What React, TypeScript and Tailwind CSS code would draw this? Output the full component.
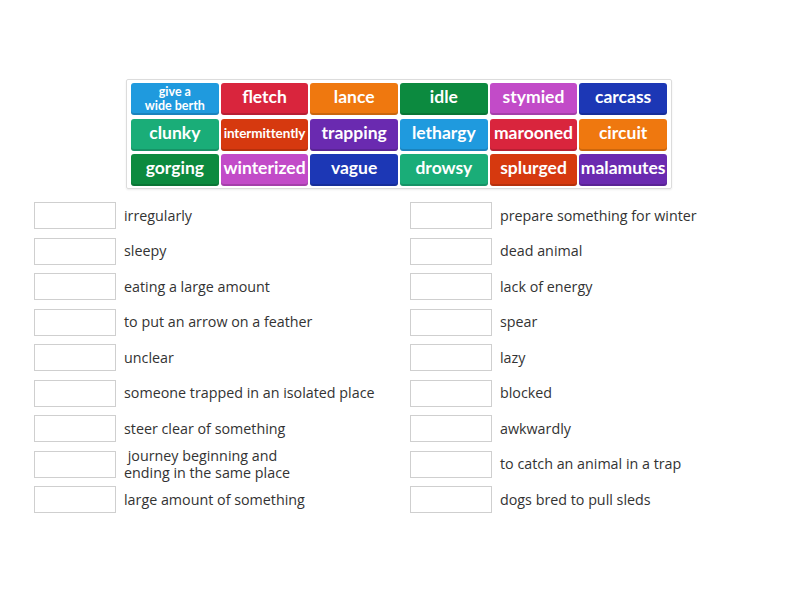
import React from 'react';

const tiles: { label: string; bg: string; small?: boolean; tiny?: boolean }[] = [
  { label: 'give a wide berth', bg: 'bg-[#1f9ade]', tiny: true },
  { label: 'fletch', bg: 'bg-[#d9253d]' },
  { label: 'lance', bg: 'bg-[#ef780f]' },
  { label: 'idle', bg: 'bg-[#0c8a3f]' },
  { label: 'stymied', bg: 'bg-[#c24bc8]' },
  { label: 'carcass', bg: 'bg-[#1c37b5]' },
  { label: 'clunky', bg: 'bg-[#1aad78]' },
  { label: 'intermittently', bg: 'bg-[#d6390f]', small: true },
  { label: 'trapping', bg: 'bg-[#6a2ab0]' },
  { label: 'lethargy', bg: 'bg-[#1f9ade]' },
  { label: 'marooned', bg: 'bg-[#d9253d]' },
  { label: 'circuit', bg: 'bg-[#ef780f]' },
  { label: 'gorging', bg: 'bg-[#0c8a3f]' },
  { label: 'winterized', bg: 'bg-[#c24bc8]' },
  { label: 'vague', bg: 'bg-[#1c37b5]' },
  { label: 'drowsy', bg: 'bg-[#1aad78]' },
  { label: 'splurged', bg: 'bg-[#d6390f]' },
  { label: 'malamutes', bg: 'bg-[#6a2ab0]' },
];

const left: React.ReactNode[] = [
  'irregularly',
  'sleepy',
  'eating a large amount',
  'to put an arrow on a feather',
  'unclear',
  'someone trapped in an isolated place',
  'steer clear of something',
  <>
    {'\u00a0journey beginning and'}
    <br />
    ending in the same place
  </>,
  'large amount of something',
];

const right: React.ReactNode[] = [
  'prepare something for winter',
  'dead animal',
  'lack of energy',
  'spear',
  'lazy',
  'blocked',
  'awkwardly',
  'to catch an animal in a trap',
  'dogs bred to pull sleds',
];

const Column: React.FC<{ items: React.ReactNode[] }> = ({ items }) => (
  <div className="flex flex-col gap-[8.5px] w-[376px]">
    {items.map((t, i) => (
      <div key={i} className="flex items-center h-[27px]">
        <div className="w-[82px] h-[27px] border border-[#cfcfcf] bg-white shrink-0" />
        <div className="ml-[8px] pb-[1px] text-[14.3px] leading-[17px] text-[#333333] whitespace-nowrap">{t}</div>
      </div>
    ))}
  </div>
);

const App: React.FC = () => {
  return (
    <div className="w-[800px] h-[600px] bg-white relative" style={{ fontFamily: '"Open Sans", sans-serif' }}>
      <div className="pt-[79px] pl-[126px]">
        <div className="w-[546px] h-[110px] border border-[#dcdcdc] rounded-[2px] p-[4px] pt-[3px] shadow-[0_1px_2px_rgba(0,0,0,0.08)]">
          <div className="grid grid-cols-6 gap-x-[2px] gap-y-[3.5px]">
            {tiles.map((t) => (
              <div
                key={t.label}
                className={`${t.bg} h-[32px] rounded-[3px] flex items-center justify-center pb-[3px] text-white font-bold text-center whitespace-nowrap shadow-[inset_0_-2px_0_rgba(0,0,0,0.15)]`}
                style={{ fontFamily: 'Lato, sans-serif' }}
              >
                {t.tiny ? (
                  <span className="text-[12.5px] leading-[13.5px] pt-[2px]">
                    give a
                    <br />
                    wide berth
                  </span>
                ) : t.small ? (
                  <span className="text-[13.5px] tracking-[-0.1px]">{t.label}</span>
                ) : (
                  <span className="text-[17.5px]">{t.label}</span>
                )}
              </div>
            ))}
          </div>
        </div>
      </div>
      <div className="flex pl-[34px] mt-[13px]">
        <Column items={left} />
        <Column items={right} />
      </div>
    </div>
  );
};

export default App;
